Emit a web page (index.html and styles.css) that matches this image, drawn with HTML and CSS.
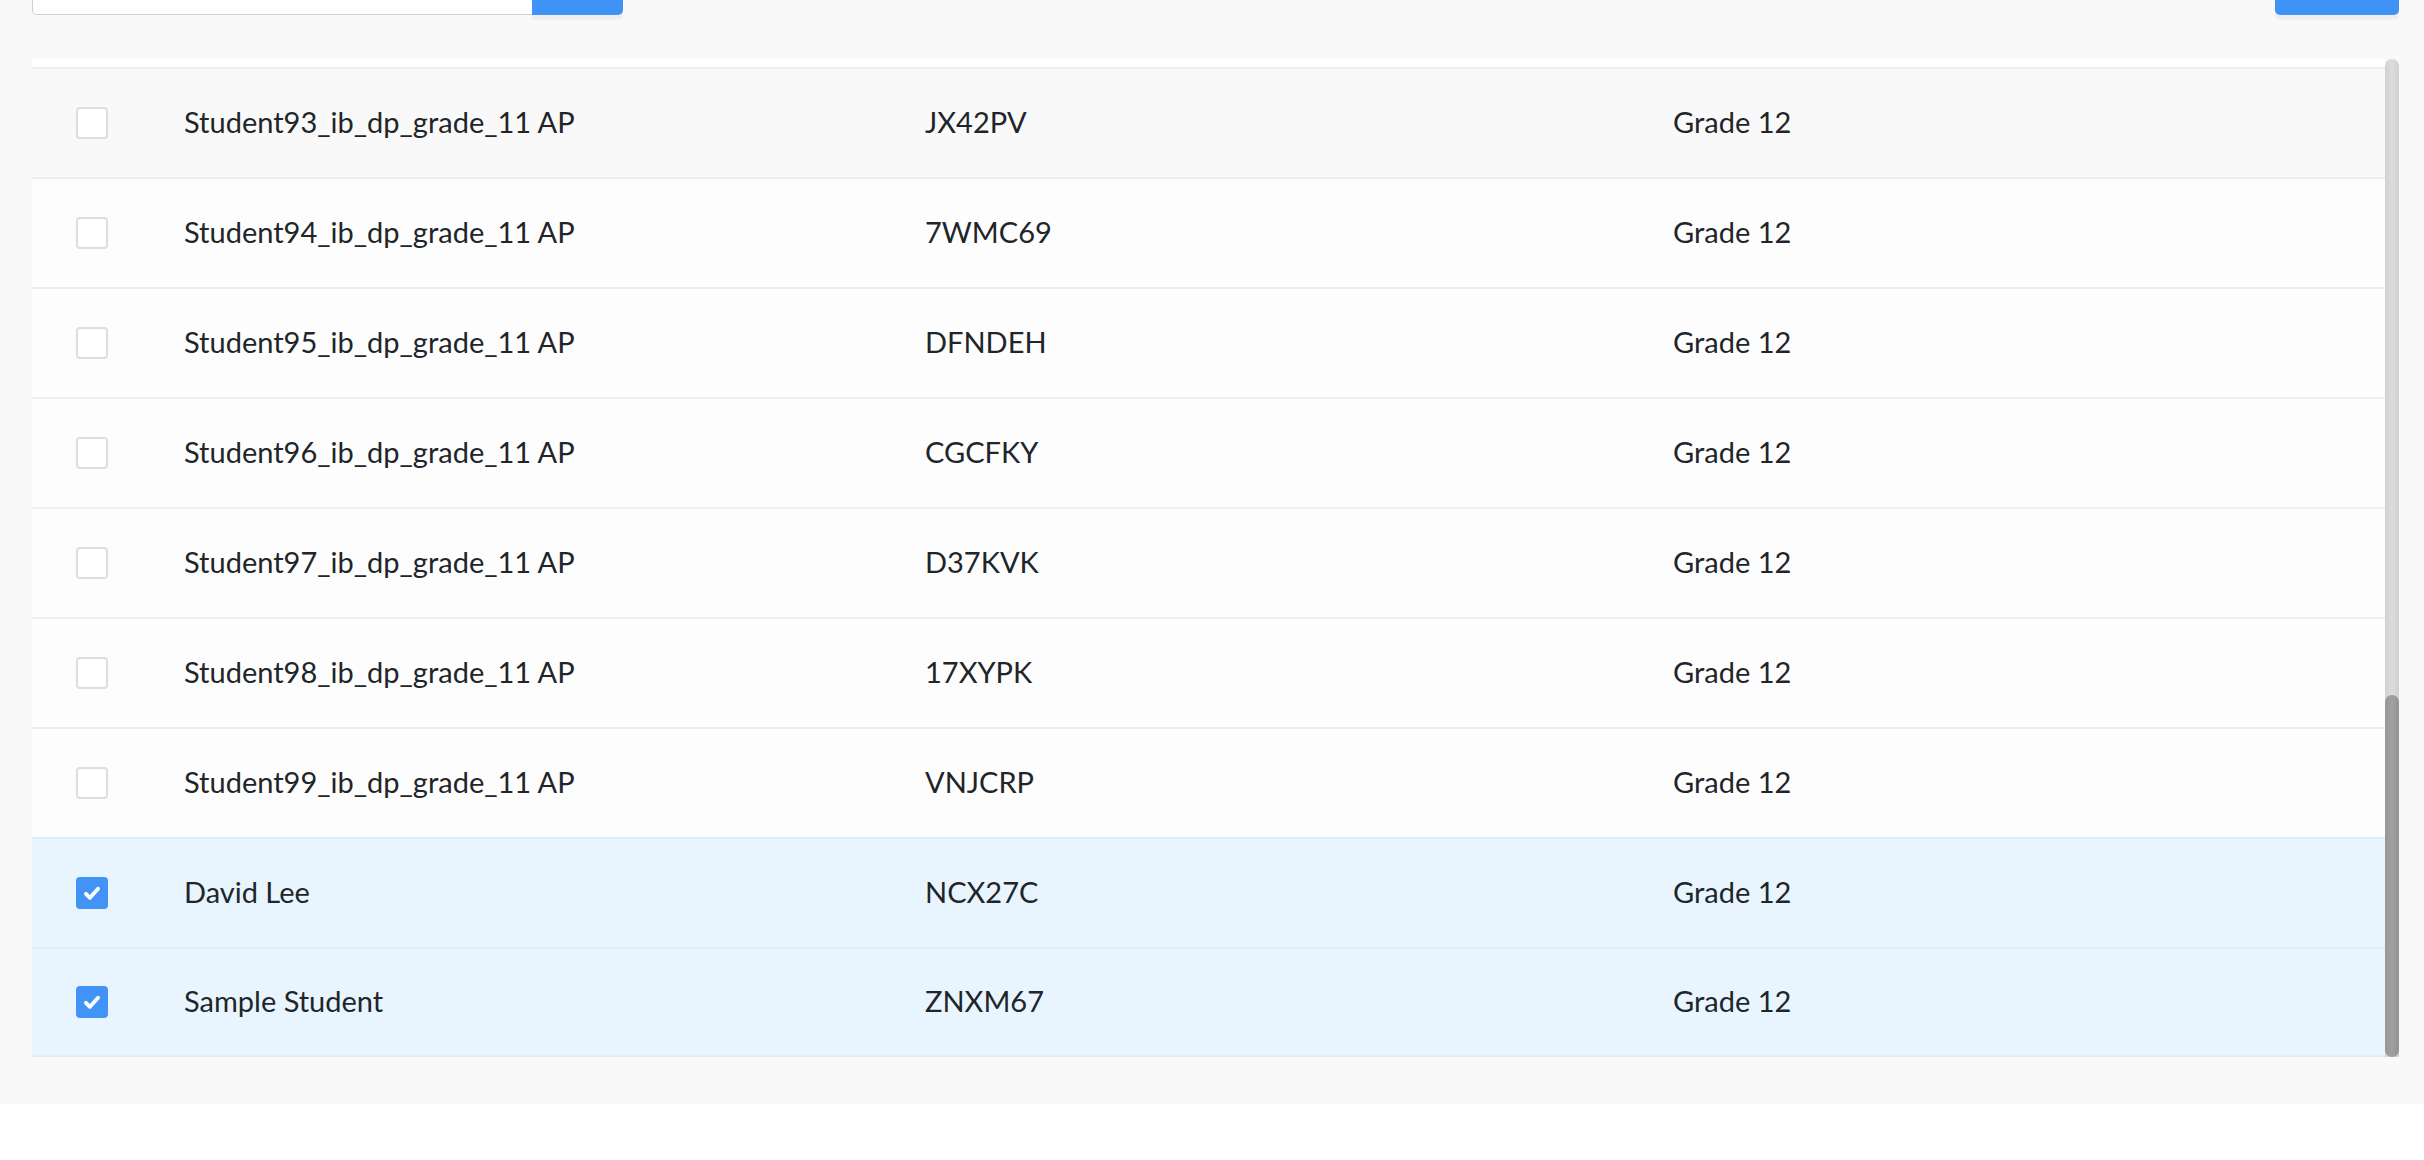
FILE: index.html
```html
<!DOCTYPE html>
<html lang="en">
<head>
<meta charset="UTF-8">
<meta name="viewport" content="width=device-width,initial-scale=1">
<title>Students</title>
<link rel="stylesheet" href="styles.css">
</head>
<body>
<div class="page">
  <div class="toolbar">
    <div class="search">
      <input class="searchInput" type="text">
      <button class="btn searchBtn"></button>
    </div>
    <button class="btn addBtn"></button>
  </div>

  <div class="card">
    <div class="list">
      <div class="row hover">
        <div class="cell"><span class="check"></span></div>
        <div class="cell">Student93_ib_dp_grade_11 AP</div>
        <div class="cell">JX42PV</div>
        <div class="cell">Grade 12</div>
      </div>
      <div class="row">
        <div class="cell"><span class="check"></span></div>
        <div class="cell">Student94_ib_dp_grade_11 AP</div>
        <div class="cell">7WMC69</div>
        <div class="cell">Grade 12</div>
      </div>
      <div class="row">
        <div class="cell"><span class="check"></span></div>
        <div class="cell">Student95_ib_dp_grade_11 AP</div>
        <div class="cell">DFNDEH</div>
        <div class="cell">Grade 12</div>
      </div>
      <div class="row">
        <div class="cell"><span class="check"></span></div>
        <div class="cell">Student96_ib_dp_grade_11 AP</div>
        <div class="cell">CGCFKY</div>
        <div class="cell">Grade 12</div>
      </div>
      <div class="row">
        <div class="cell"><span class="check"></span></div>
        <div class="cell">Student97_ib_dp_grade_11 AP</div>
        <div class="cell">D37KVK</div>
        <div class="cell">Grade 12</div>
      </div>
      <div class="row">
        <div class="cell"><span class="check"></span></div>
        <div class="cell">Student98_ib_dp_grade_11 AP</div>
        <div class="cell">17XYPK</div>
        <div class="cell">Grade 12</div>
      </div>
      <div class="row">
        <div class="cell"><span class="check"></span></div>
        <div class="cell">Student99_ib_dp_grade_11 AP</div>
        <div class="cell">VNJCRP</div>
        <div class="cell">Grade 12</div>
      </div>
      <div class="row selected">
        <div class="cell"><span class="check checked"><svg viewBox="0 0 16 16" width="22" height="22"><path d="M3.6 8.6l2.9 2.9 5.9-6.6" fill="none" stroke="#fff" stroke-width="2.8" stroke-linecap="round" stroke-linejoin="round"/></svg></span></div>
        <div class="cell">David Lee</div>
        <div class="cell">NCX27C</div>
        <div class="cell">Grade 12</div>
      </div>
      <div class="row selected">
        <div class="cell"><span class="check checked"><svg viewBox="0 0 16 16" width="22" height="22"><path d="M3.6 8.6l2.9 2.9 5.9-6.6" fill="none" stroke="#fff" stroke-width="2.8" stroke-linecap="round" stroke-linejoin="round"/></svg></span></div>
        <div class="cell">Sample Student</div>
        <div class="cell">ZNXM67</div>
        <div class="cell">Grade 12</div>
      </div>
    </div>
    <!-- scrollbar of the list -->
    <div class="scrollbar">
      <div class="thumb"></div>
    </div>
  </div>
</div>
</body>
</html>
```

FILE: styles.css
```css
body {
  margin: 0;
  background: #fff;
  font-family: Lato, "Noto Sans", sans-serif;
  color: #212529;
}

.page {
  background: #f9f9f9;
  padding: 0 25px 47px 32px;
}

/* Top toolbar (scrolled mostly out of view) */
.toolbar {
  display: flex;
  justify-content: space-between;
  margin-top: -33px;
  height: 48px;
}
.search {
  display: flex;
}
.searchInput {
  box-sizing: border-box;
  width: 500px;
  height: 48px;
  margin: 0;
  border: 1px solid #cfcfcf;
  border-right: none;
  border-radius: 0 0 0 5px;
  background: #fff;
}
.btn {
  height: 48px;
  border: none;
  background: #3f93f7;
  box-shadow: 0 5px 0 #efefef;
  cursor: pointer;
}
.searchBtn {
  width: 91px;
  border-radius: 0 0 5px 0;
}
.addBtn {
  width: 124px;
  border-radius: 0 0 5px 5px;
}

/* Student list */
.card {
  display: flex;
  margin-top: 44px;
}
.list {
  flex: 1;
  background: #fff;
  padding-top: 8px;
}
.row {
  display: grid;
  grid-template-columns: 152px 741px 748px 1fr;
  align-items: center;
  height: 110px;
  box-sizing: border-box;
  border-top: 2px solid #efefef;
  background: #fdfdfd;
  font-size: 29px;
}
.row.hover {
  background: #f9f9f9;
}
.row.selected {
  background: #e8f5fe;
  border-top-color: #e1eef8;
}
.row:last-child {
  border-bottom: 2px solid #e1eef8;
}
.cell {
  white-space: nowrap;
  padding-bottom: 3px;
}
.check {
  display: flex;
  justify-content: center;
  align-items: center;
  box-sizing: border-box;
  width: 32px;
  height: 32px;
  margin-left: 44px;
  margin-top: 2px;
  border: 2px solid #dedede;
  border-radius: 4px;
  background: #fff;
}
.check.checked {
  border: none;
  background: #4193f5;
}

.scrollbar {
  display: flex;
  flex-direction: column;
  justify-content: flex-end;
  width: 14px;
  background: linear-gradient(to right, #d2d2d2, #dcdcdc 50%, #d0d0d0);
  border-radius: 7px 7px 0 0;
}
.thumb {
  height: 362px;
  background: linear-gradient(to right, #989898, #a0a0a0 50%, #929292);
  border-radius: 7px;
}
```
